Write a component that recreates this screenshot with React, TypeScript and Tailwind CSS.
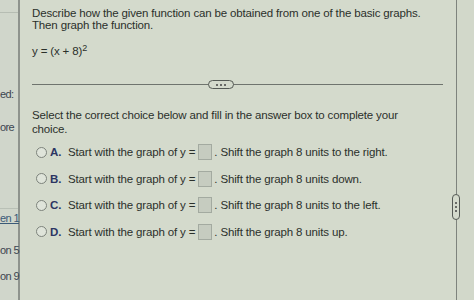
import * as React from "react";

const options = [
  { id: "A", text: "Shift the graph 8 units to the right." },
  { id: "B", text: "Shift the graph 8 units down." },
  { id: "C", text: "Shift the graph 8 units to the left." },
  { id: "D", text: "Shift the graph 8 units up." },
];

export default function App() {
  return (
    <div
      className="flex h-[300px] w-[474px] overflow-hidden bg-[#d4dacc] text-[#2b302b]"
      style={{ fontFamily: '"Liberation Sans", Arial, sans-serif' }}
    >
      {/* Left sidebar (cut off) */}
      <aside className="relative w-[18px] shrink-0 whitespace-nowrap bg-[#d0d6cb] text-[11px] tracking-[-0.6px] text-[#3c4550]">
        <div className="absolute left-0 top-[12px] h-px w-full bg-[#b6bdb3]" />
        <div className="absolute left-0 top-[89px] leading-none">ed:</div>
        <div className="absolute left-0 top-[122px] leading-none">ore</div>
        <div className="absolute left-0 top-[208px] h-px w-full bg-[#b9c0b6]" />
        <div className="absolute left-0 top-[213px] leading-none text-[#3b5a78] underline">en 1</div>
        <div className="absolute left-0 top-[245px] leading-none">on 5</div>
        <div className="absolute left-0 top-[271px] leading-none">on 9</div>
      </aside>
      <div className="w-[2px] shrink-0 bg-[#8e938d]" />

      {/* Main question area */}
      <main className="flex w-[435px] shrink-0 flex-col whitespace-nowrap pl-[12px] pr-[12px] text-[11.5px] leading-[12px] tracking-[-0.15px]">
        <div className="pt-[7px]">
          <p>Describe how the given function can be obtained from one of the basic graphs.</p>
          <p>Then graph the function.</p>
        </div>
        <p className="mt-[14px]">
          y = (x + 8)<sup className="text-[9px]">2</sup>
        </p>

        <div className="relative mt-[27px] flex items-center">
          <div className="h-px flex-1 bg-[#6f746e]" />
          <div className="absolute left-[176px] flex h-[9px] w-[26px] items-center justify-center gap-[2px] rounded-full border border-[#555a55] bg-[#d4dacc]">
            <span className="h-[2px] w-[2px] rounded-full bg-[#444]" />
            <span className="h-[2px] w-[2px] rounded-full bg-[#444]" />
            <span className="h-[2px] w-[2px] rounded-full bg-[#444]" />
          </div>
        </div>

        <div className="mt-[23px] leading-[14px]">
          <p>Select the correct choice below and fill in the answer box to complete your</p>
          <p>choice.</p>
        </div>

        <div className="mt-[8px] flex flex-col gap-[10.5px] pl-[4px]">
          {options.map((o) => (
            <div key={o.id} className="flex h-[16px] items-center">
              <span className="h-[11px] w-[11px] rounded-full border border-[#7d837c] bg-[#dfe4da]" />
              <span className="ml-[3px] w-[18px] font-bold text-[#2c3563]">{o.id}.</span>
              <span>Start with the graph of y =</span>
              <span className="ml-[3px] h-[16px] w-[14px] border border-[#a3aaa0] bg-[#c6ccc0]" />
              <span className="ml-[2px]">. {o.text}</span>
            </div>
          ))}
        </div>
      </main>

      {/* Right divider with handle */}
      <div className="relative flex w-[2px] shrink-0 justify-center">
        <div className="h-full w-px bg-[#7e837d]" />
        <div className="absolute top-[194px] flex h-[26px] w-[8px] flex-col items-center justify-center gap-[2px] rounded-full border border-[#555a55] bg-[#d4dacc]">
          <span className="h-[2px] w-[2px] rounded-full bg-[#444]" />
          <span className="h-[2px] w-[2px] rounded-full bg-[#444]" />
          <span className="h-[2px] w-[2px] rounded-full bg-[#444]" />
        </div>
      </div>
      <div className="flex-1 bg-[#d2d8ca]" />
    </div>
  );
}
